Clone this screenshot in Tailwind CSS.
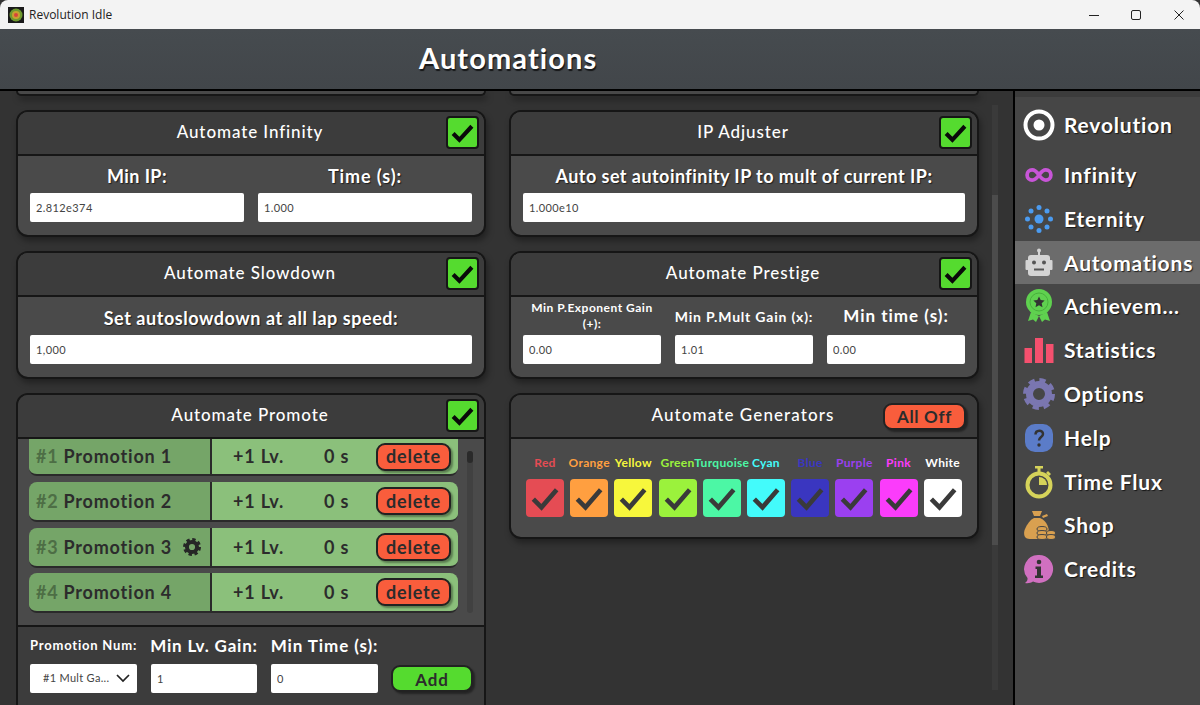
<!DOCTYPE html>
<html lang="en">
<head>
    <meta charset="UTF-8">
    <title>Revolution Idle</title>
    <script src="https://cdn.jsdelivr.net/npm/@tailwindcss/browser@4"></script>
</head>
<body class="bg-[#333333] w-[1200px] h-[705px] overflow-hidden [font-family:Lato,sans-serif] text-white">
    <!-- window title bar -->
    <div class="h-[29px] bg-[#f3f3f3] flex items-center pl-[8px] rounded-t-[8px]">
        <svg width="16" height="16" viewBox="0 0 16 16"><rect width="16" height="16" fill="#1a1a1a"/><circle cx="8" cy="8" r="6.5" fill="#6f9a2e"/><circle cx="8" cy="8" r="4" fill="#c8a030"/><circle cx="8" cy="8" r="2" fill="#d8433a"/></svg>
        <span class="ml-[5px] text-[12px] text-[#222] [font-family:'Open_Sans',sans-serif]">Revolution Idle</span>
        <div class="ml-auto flex items-center">
            <svg class="mr-[32px]" width="10" height="10" viewBox="0 0 10 10"><path d="M0 5.5h10" stroke="#222" stroke-width="1"/></svg>
            <svg class="mr-[33px]" width="10" height="10" viewBox="0 0 10 10"><rect x=".5" y=".5" width="9" height="9" rx="1.5" fill="none" stroke="#222"/></svg>
            <svg class="mr-[16px]" width="10" height="10" viewBox="0 0 10 10"><path d="M.5.5l9 9M9.5.5l-9 9" stroke="#222"/></svg>
        </div>
    </div>

    <!-- page header -->
    <div class="h-[62px] bg-gradient-to-b from-[#464b4f] to-[#42464a] border-b-2 border-black flex items-center pl-[419px] pb-[2px]">
        <h1 class="text-[29px] font-bold tracking-[1.1px] [text-shadow:1px_2px_1px_rgba(0,0,0,0.7)]">Automations</h1>
    </div>

    <div class="flex h-[614px]">
        <!-- scrolled content -->
        <div class="w-[1013px] h-full overflow-hidden flex pl-[16px] relative">
            <div class="w-[470px] shrink-0 flex flex-col">
                <div class="h-[5px] shrink-0 bg-[#484848] border-2 border-t-0 border-[#161616] rounded-b-[12px] mb-[14px] shadow-[2px_4px_6px_rgba(0,0,0,0.35)]"></div>

                <section class="h-[127px] shrink-0 rounded-[12px] border-2 border-[#161616] bg-[#4a4a4a] overflow-hidden flex flex-col mb-[14px] shadow-[2px_4px_6px_rgba(0,0,0,0.35)]">
                    <div class="h-[44px] shrink-0 bg-[#3c3c3c] border-b-2 border-[#161616] flex items-center justify-center relative pb-[2px]">
                        <span class="text-[17px] font-medium tracking-[0.9px] pr-[2px]">Automate Infinity</span>
                        <div class="absolute right-[5px] top-[4px] w-[33px] h-[33px] rounded-[4px] bg-[#55db2f] border-2 border-[#161616] flex items-center justify-center">
                            <svg width="25" height="25" viewBox="0 0 24 24"><path d="M3 13l6 6L21 6" fill="none" stroke="#0a0a0a" stroke-width="4"/></svg>
                        </div>
                    </div>
                    <div class="flex gap-[14px] px-[12px] pt-[10px]">
                        <div class="flex-1">
                            <div class="h-[20px] mb-[7px] flex items-center justify-center text-[18px] font-bold tracking-[0.4px] [text-shadow:1px_1px_1px_rgba(0,0,0,0.6)]">Min IP:</div>
                            <input value="2.812e374" class="w-full h-[29px] bg-white rounded-[2px] px-[6px] text-[11px] tracking-[0.4px] text-[#444]">
                        </div>
                        <div class="flex-1">
                            <div class="h-[20px] mb-[7px] flex items-center justify-center text-[18px] font-bold tracking-[0.9px] [text-shadow:1px_1px_1px_rgba(0,0,0,0.6)]">Time (s):</div>
                            <input value="1.000" class="w-full h-[29px] bg-white rounded-[2px] px-[6px] text-[11px] tracking-[0.4px] text-[#444]">
                        </div>
                    </div>
                </section>

                <section class="h-[128px] shrink-0 rounded-[12px] border-2 border-[#161616] bg-[#4a4a4a] overflow-hidden flex flex-col mb-[14px] shadow-[2px_4px_6px_rgba(0,0,0,0.35)]">
                    <div class="h-[44px] shrink-0 bg-[#3c3c3c] border-b-2 border-[#161616] flex items-center justify-center relative pb-[2px]">
                        <span class="text-[17px] font-medium tracking-[0.9px] pr-[2px]">Automate Slowdown</span>
                        <div class="absolute right-[5px] top-[4px] w-[33px] h-[33px] rounded-[4px] bg-[#55db2f] border-2 border-[#161616] flex items-center justify-center">
                            <svg width="25" height="25" viewBox="0 0 24 24"><path d="M3 13l6 6L21 6" fill="none" stroke="#0a0a0a" stroke-width="4"/></svg>
                        </div>
                    </div>
                    <div class="px-[12px] pt-[11px]">
                        <div class="h-[20px] mb-[7px] flex items-center justify-center text-[18px] font-bold tracking-[0.55px] [text-shadow:1px_1px_1px_rgba(0,0,0,0.6)]">Set autoslowdown at all lap speed:</div>
                        <input value="1,000" class="w-full h-[29px] bg-white rounded-[2px] px-[6px] text-[11px] tracking-[0.4px] text-[#444]">
                    </div>
                </section>

                <section class="h-[330px] shrink-0 rounded-[12px] border-2 border-[#161616] bg-[#3c3c3c] overflow-hidden flex flex-col">
                    <div class="h-[44px] shrink-0 bg-[#3c3c3c] border-b-2 border-[#161616] flex items-center justify-center relative pb-[2px]">
                        <span class="text-[17px] font-medium tracking-[0.9px] pr-[2px]">Automate Promote</span>
                        <div class="absolute right-[5px] top-[4px] w-[33px] h-[33px] rounded-[4px] bg-[#55db2f] border-2 border-[#161616] flex items-center justify-center">
                            <svg width="25" height="25" viewBox="0 0 24 24"><path d="M3 13l6 6L21 6" fill="none" stroke="#0a0a0a" stroke-width="4"/></svg>
                        </div>
                    </div>
                    <div class="h-[188px] shrink-0 bg-[#4a4a4a] border-b-2 border-[#161616] pl-[11px] flex relative">
                        <div class="w-[429px] flex flex-col">
                            <div class="h-[37px] shrink-0 mb-[6px] flex rounded-b-[8px] overflow-hidden border-b-2 border-[#2a2a2a]">
                                <div class="w-[183px] bg-[#75a568] border-r-2 border-[#2a2a2a] flex items-center pl-[7px] text-[18px] font-bold tracking-[0.8px] text-[#2c2c2c]"><span class="text-[#4d6e45] mr-[5px]">#1</span>Promotion 1</div>
                                <div class="flex-1 bg-[#8bc07b] flex items-center text-[18px] font-bold tracking-[0.8px] text-[#2c2c2c]"><span class="ml-[21px] w-[91px]">+1 Lv.</span><span class="w-[52px]">0 s</span><span class="w-[75px] h-[28px] rounded-[9px] bg-[#f95d3c] border-2 border-[#222] flex items-center justify-center shadow-[2px_2px_2px_rgba(0,0,0,0.35)]">delete</span></div>
                            </div>
                            <div class="h-[40px] shrink-0 mb-[6px] flex rounded-[8px] overflow-hidden border-b-2 border-[#2a2a2a]">
                                <div class="w-[183px] bg-[#75a568] border-r-2 border-[#2a2a2a] flex items-center pl-[7px] text-[18px] font-bold tracking-[0.8px] text-[#2c2c2c]"><span class="text-[#4d6e45] mr-[5px]">#2</span>Promotion 2</div>
                                <div class="flex-1 bg-[#8bc07b] flex items-center text-[18px] font-bold tracking-[0.8px] text-[#2c2c2c]"><span class="ml-[21px] w-[91px]">+1 Lv.</span><span class="w-[52px]">0 s</span><span class="w-[75px] h-[28px] rounded-[9px] bg-[#f95d3c] border-2 border-[#222] flex items-center justify-center shadow-[2px_2px_2px_rgba(0,0,0,0.35)]">delete</span></div>
                            </div>
                            <div class="h-[40px] shrink-0 mb-[5px] flex rounded-[8px] overflow-hidden border-b-2 border-[#2a2a2a]">
                                <div class="w-[183px] bg-[#75a568] border-r-2 border-[#2a2a2a] flex items-center pl-[7px] text-[18px] font-bold tracking-[0.8px] text-[#2c2c2c]"><span class="text-[#4d6e45] mr-[5px]">#3</span>Promotion 3
                                    <svg class="ml-[11px]" width="18" height="18" viewBox="0 0 32 32"><circle cx="16" cy="16" r="9" fill="none" stroke="#262626" stroke-width="7"/><circle cx="16" cy="16" r="13.5" fill="none" stroke="#262626" stroke-width="5" stroke-dasharray="6 4.6"/></svg>
                                </div>
                                <div class="flex-1 bg-[#8bc07b] flex items-center text-[18px] font-bold tracking-[0.8px] text-[#2c2c2c]"><span class="ml-[21px] w-[91px]">+1 Lv.</span><span class="w-[52px]">0 s</span><span class="w-[75px] h-[28px] rounded-[9px] bg-[#f95d3c] border-2 border-[#222] flex items-center justify-center shadow-[2px_2px_2px_rgba(0,0,0,0.35)]">delete</span></div>
                            </div>
                            <div class="h-[40px] shrink-0 flex rounded-[8px] overflow-hidden border-b-2 border-[#2a2a2a]">
                                <div class="w-[183px] bg-[#75a568] border-r-2 border-[#2a2a2a] flex items-center pl-[7px] text-[18px] font-bold tracking-[0.8px] text-[#2c2c2c]"><span class="text-[#4d6e45] mr-[5px]">#4</span>Promotion 4</div>
                                <div class="flex-1 bg-[#8bc07b] flex items-center text-[18px] font-bold tracking-[0.8px] text-[#2c2c2c]"><span class="ml-[21px] w-[91px]">+1 Lv.</span><span class="w-[52px]">0 s</span><span class="w-[75px] h-[28px] rounded-[9px] bg-[#f95d3c] border-2 border-[#222] flex items-center justify-center shadow-[2px_2px_2px_rgba(0,0,0,0.35)]">delete</span></div>
                            </div>
                        </div>
                        <div class="ml-[9px] mt-[12px] w-[6px] h-[162px] rounded-full bg-[#414141]"><div class="h-[12px] rounded-full bg-[#2a2a2a]"></div></div>
                    </div>
                    <div class="flex pl-[12px] pt-[9px] gap-[14px]">
                        <div class="w-[107px]">
                            <div class="h-[20px] mb-[8px] flex items-center justify-center text-[13px] font-bold tracking-[0.8px] whitespace-nowrap">Promotion Num:</div>
                            <div class="h-[29px] bg-white rounded-[2px] flex items-center pl-[13px] text-[11px] tracking-[0.3px] text-[#444]">#1 Mult Ga...
                                <svg class="ml-[7px]" width="14" height="9" viewBox="0 0 14 9"><path d="M1 1l6 6 6-6" fill="none" stroke="#222" stroke-width="1.7"/></svg>
                            </div>
                        </div>
                        <div class="w-[106px]">
                            <div class="h-[20px] mb-[8px] flex items-center justify-center text-[17px] font-bold tracking-[0.8px] whitespace-nowrap">Min Lv. Gain:</div>
                            <input value="1" class="w-full h-[29px] bg-white rounded-[2px] px-[6px] text-[11px] text-[#444]">
                        </div>
                        <div class="w-[107px]">
                            <div class="h-[20px] mb-[8px] flex items-center justify-center text-[17px] font-bold tracking-[0.9px] whitespace-nowrap">Min Time (s):</div>
                            <input value="0" class="w-full h-[29px] bg-white rounded-[2px] px-[6px] text-[11px] text-[#444]">
                        </div>
                        <button class="w-[82px] h-[27px] mt-[29px] -ml-[1px] rounded-[9px] bg-[#55db2f] border-2 border-[#222] text-[17px] font-bold tracking-[0.8px] text-[#2c2c2c] shadow-[2px_2px_2px_rgba(0,0,0,0.4)]">Add</button>
                    </div>
                </section>
            </div>

            <div class="w-[470px] shrink-0 ml-[23px] flex flex-col">
                <div class="h-[5px] shrink-0 bg-[#484848] border-2 border-t-0 border-[#161616] rounded-b-[12px] mb-[14px] shadow-[2px_4px_6px_rgba(0,0,0,0.35)]"></div>

                <section class="h-[127px] shrink-0 rounded-[12px] border-2 border-[#161616] bg-[#4a4a4a] overflow-hidden flex flex-col mb-[14px] shadow-[2px_4px_6px_rgba(0,0,0,0.35)]">
                    <div class="h-[44px] shrink-0 bg-[#3c3c3c] border-b-2 border-[#161616] flex items-center justify-center relative pb-[2px]">
                        <span class="text-[17px] font-medium tracking-[0.9px] pr-[2px]">IP Adjuster</span>
                        <div class="absolute right-[5px] top-[4px] w-[33px] h-[33px] rounded-[4px] bg-[#55db2f] border-2 border-[#161616] flex items-center justify-center">
                            <svg width="25" height="25" viewBox="0 0 24 24"><path d="M3 13l6 6L21 6" fill="none" stroke="#0a0a0a" stroke-width="4"/></svg>
                        </div>
                    </div>
                    <div class="px-[12px] pt-[10px]">
                        <div class="h-[20px] mb-[7px] flex items-center justify-center text-[18px] font-bold tracking-[0.45px] [text-shadow:1px_1px_1px_rgba(0,0,0,0.6)]">Auto set autoinfinity IP to mult of current IP:</div>
                        <input value="1.000e10" class="w-full h-[29px] bg-white rounded-[2px] px-[6px] text-[11px] tracking-[0.4px] text-[#444]">
                    </div>
                </section>

                <section class="h-[128px] shrink-0 rounded-[12px] border-2 border-[#161616] bg-[#4a4a4a] overflow-hidden flex flex-col mb-[14px] shadow-[2px_4px_6px_rgba(0,0,0,0.35)]">
                    <div class="h-[44px] shrink-0 bg-[#3c3c3c] border-b-2 border-[#161616] flex items-center justify-center relative pb-[2px]">
                        <span class="text-[17px] font-medium tracking-[0.9px] pr-[2px]">Automate Prestige</span>
                        <div class="absolute right-[5px] top-[4px] w-[33px] h-[33px] rounded-[4px] bg-[#55db2f] border-2 border-[#161616] flex items-center justify-center">
                            <svg width="25" height="25" viewBox="0 0 24 24"><path d="M3 13l6 6L21 6" fill="none" stroke="#0a0a0a" stroke-width="4"/></svg>
                        </div>
                    </div>
                    <div class="flex gap-[14px] px-[12px]">
                        <div class="w-[138px]">
                            <div class="h-[38px] flex items-center justify-center text-center text-[12px] leading-[16px] font-bold tracking-[0.5px]">Min P.Exponent Gain (+):</div>
                            <input value="0.00" class="w-full h-[29px] bg-white rounded-[2px] px-[6px] text-[11px] tracking-[0.4px] text-[#444]">
                        </div>
                        <div class="w-[138px]">
                            <div class="h-[38px] flex items-center justify-center text-[14px] font-bold tracking-[0.8px] whitespace-nowrap">Min P.Mult Gain (x):</div>
                            <input value="1.01" class="w-full h-[29px] bg-white rounded-[2px] px-[6px] text-[11px] tracking-[0.4px] text-[#444]">
                        </div>
                        <div class="w-[138px]">
                            <div class="h-[38px] flex items-center justify-center text-[17px] font-bold tracking-[1px] whitespace-nowrap">Min time (s):</div>
                            <input value="0.00" class="w-full h-[29px] bg-white rounded-[2px] px-[6px] text-[11px] tracking-[0.4px] text-[#444]">
                        </div>
                    </div>
                </section>

                <section class="h-[146px] shrink-0 rounded-[12px] border-2 border-[#161616] bg-[#4a4a4a] overflow-hidden flex flex-col shadow-[2px_4px_6px_rgba(0,0,0,0.35)]">
                    <div class="h-[44px] shrink-0 bg-[#3c3c3c] border-b-2 border-[#161616] flex items-center justify-center relative pb-[2px]">
                        <span class="text-[17px] font-medium tracking-[1.1px] pr-[2px]">Automate Generators</span>
                        <div class="absolute right-[11px] top-[8px] w-[83px] h-[27px] rounded-[9px] bg-[#f95d3c] border-2 border-[#222] flex items-center justify-center text-[17px] font-bold tracking-[0.7px] text-[#2c2c2c] shadow-[2px_2px_2px_rgba(0,0,0,0.4)]">All Off</div>
                    </div>
                    <div class="flex gap-[6.2px] pl-[15px] pt-[15px]">
                        <div class="w-[38px] flex flex-col items-center"><span class="h-[16px] text-[12px] tracking-[0.3px] font-bold whitespace-nowrap text-[#e54c54]">Red</span><span class="mt-[9px] w-[38px] h-[38px] rounded-[4px] bg-[#e54c54] flex items-center justify-center"><svg width="28" height="28" viewBox="0 0 24 24"><path d="M2 13l7 7L22 5" fill="none" stroke="#3a3a3a" stroke-width="4"/></svg></span></div>
                        <div class="w-[38px] flex flex-col items-center"><span class="h-[16px] text-[12px] tracking-[0.3px] font-bold whitespace-nowrap text-[#ff9f40]">Orange</span><span class="mt-[9px] w-[38px] h-[38px] rounded-[4px] bg-[#ff9f40] flex items-center justify-center"><svg width="28" height="28" viewBox="0 0 24 24"><path d="M2 13l7 7L22 5" fill="none" stroke="#3a3a3a" stroke-width="4"/></svg></span></div>
                        <div class="w-[38px] flex flex-col items-center"><span class="h-[16px] text-[12px] tracking-[0.3px] font-bold whitespace-nowrap text-[#f7f73c]">Yellow</span><span class="mt-[9px] w-[38px] h-[38px] rounded-[4px] bg-[#f7f73c] flex items-center justify-center"><svg width="28" height="28" viewBox="0 0 24 24"><path d="M2 13l7 7L22 5" fill="none" stroke="#3a3a3a" stroke-width="4"/></svg></span></div>
                        <div class="w-[38px] flex flex-col items-center"><span class="h-[16px] text-[12px] tracking-[0.3px] font-bold whitespace-nowrap text-[#9bf23c]">Green</span><span class="mt-[9px] w-[38px] h-[38px] rounded-[4px] bg-[#9bf23c] flex items-center justify-center"><svg width="28" height="28" viewBox="0 0 24 24"><path d="M2 13l7 7L22 5" fill="none" stroke="#3a3a3a" stroke-width="4"/></svg></span></div>
                        <div class="w-[38px] flex flex-col items-center"><span class="h-[16px] text-[12px] tracking-[0.3px] font-bold whitespace-nowrap text-[#4cf7a5]">Turquoise</span><span class="mt-[9px] w-[38px] h-[38px] rounded-[4px] bg-[#4cf7a5] flex items-center justify-center"><svg width="28" height="28" viewBox="0 0 24 24"><path d="M2 13l7 7L22 5" fill="none" stroke="#3a3a3a" stroke-width="4"/></svg></span></div>
                        <div class="w-[38px] flex flex-col items-center"><span class="h-[16px] text-[12px] tracking-[0.3px] font-bold whitespace-nowrap text-[#43fbfb]">Cyan</span><span class="mt-[9px] w-[38px] h-[38px] rounded-[4px] bg-[#43fbfb] flex items-center justify-center"><svg width="28" height="28" viewBox="0 0 24 24"><path d="M2 13l7 7L22 5" fill="none" stroke="#3a3a3a" stroke-width="4"/></svg></span></div>
                        <div class="w-[38px] flex flex-col items-center"><span class="h-[16px] text-[12px] tracking-[0.3px] font-bold whitespace-nowrap text-[#3a36c0]">Blue</span><span class="mt-[9px] w-[38px] h-[38px] rounded-[4px] bg-[#3a36c0] flex items-center justify-center"><svg width="28" height="28" viewBox="0 0 24 24"><path d="M2 13l7 7L22 5" fill="none" stroke="#3a3a3a" stroke-width="4"/></svg></span></div>
                        <div class="w-[38px] flex flex-col items-center"><span class="h-[16px] text-[12px] tracking-[0.3px] font-bold whitespace-nowrap text-[#9b40f0]">Purple</span><span class="mt-[9px] w-[38px] h-[38px] rounded-[4px] bg-[#9b40f0] flex items-center justify-center"><svg width="28" height="28" viewBox="0 0 24 24"><path d="M2 13l7 7L22 5" fill="none" stroke="#3a3a3a" stroke-width="4"/></svg></span></div>
                        <div class="w-[38px] flex flex-col items-center"><span class="h-[16px] text-[12px] tracking-[0.3px] font-bold whitespace-nowrap text-[#fb3cfb]">Pink</span><span class="mt-[9px] w-[38px] h-[38px] rounded-[4px] bg-[#fb3cfb] flex items-center justify-center"><svg width="28" height="28" viewBox="0 0 24 24"><path d="M2 13l7 7L22 5" fill="none" stroke="#3a3a3a" stroke-width="4"/></svg></span></div>
                        <div class="w-[38px] flex flex-col items-center"><span class="h-[16px] text-[12px] tracking-[0.3px] font-bold whitespace-nowrap text-white">White</span><span class="mt-[9px] w-[38px] h-[38px] rounded-[4px] bg-white flex items-center justify-center"><svg width="28" height="28" viewBox="0 0 24 24"><path d="M2 13l7 7L22 5" fill="none" stroke="#3a3a3a" stroke-width="4"/></svg></span></div>
                    </div>
                </section>
            </div>

            <!-- page scrollbar -->
            <div class="ml-[13px] mt-[14px] w-[6px] h-[585px] shrink-0 bg-[#3a3a3a]"><div class="mt-[90px] h-[350px] bg-[#4c4c4c]"></div></div>
        </div>

        <!-- sidebar -->
        <nav class="w-[187px] h-full bg-[#464646] border-l-2 border-black flex flex-col [text-shadow:1px_1px_1px_rgba(0,0,0,0.7)] text-[21px] font-bold tracking-[0.8px]">
            <div class="h-[6px] bg-[#3c3c3c] shrink-0"></div>
            <div class="h-[56px] shrink-0 flex items-center pl-[8px]">
                <svg class="shrink-0" width="32" height="32" viewBox="0 0 32 32"><circle cx="16" cy="16" r="13.5" fill="none" stroke="#fff" stroke-width="4"/><circle cx="16" cy="16" r="5.5" fill="#fff"/></svg>
                <span class="ml-[9px]">Revolution</span>
            </div>
            <div class="h-[44px] shrink-0 flex items-center pl-[8px]">
                <svg class="shrink-0" width="32" height="32" viewBox="0 0 32 32"><path transform="translate(16 16) scale(.85) translate(-16 -16)" d="M16 16c-2.500-3.500-4.500-6-8-6a6 6 0 0 0 0 12c3.500 0 5.500-2.500 8-6s4.500-6 8-6a6 6 0 0 1 0 12c-3.500 0-5.500-2.500-8-6z" fill="none" stroke="#c855d8" stroke-width="4.400"/></svg>
                <span class="ml-[9px]">Infinity</span>
            </div>
            <div class="h-[44px] shrink-0 flex items-center pl-[8px]">
                <svg class="shrink-0" width="32" height="32" viewBox="0 0 32 32" fill="#4b9bf0"><circle cx="16" cy="16" r="4.500"/><circle cx="16" cy="4.500" r="2.500"/><circle cx="16" cy="27.500" r="2.500"/><circle cx="4.500" cy="16" r="2.500"/><circle cx="27.500" cy="16" r="2.500"/><circle cx="8" cy="8" r="2.500"/><circle cx="24" cy="8" r="2.500"/><circle cx="8" cy="24" r="2.500"/><circle cx="24" cy="24" r="2.500"/></svg>
                <span class="ml-[9px]">Eternity</span>
            </div>
            <div class="h-[43px] shrink-0 flex items-center pl-[8px] bg-[#6c6c6c]">
                <svg class="shrink-0" width="32" height="32" viewBox="0 0 32 32"><circle cx="16" cy="3.500" r="2" fill="#d4d4d4"/><path d="M15 4h2v5h-2z" fill="#d4d4d4"/><rect x="5" y="8" width="22" height="21" rx="3" fill="#d4d4d4"/><rect x="2.500" y="13" width="3" height="10" rx="1" fill="#d4d4d4"/><rect x="26.500" y="13" width="3" height="10" rx="1" fill="#d4d4d4"/><circle cx="11" cy="15.500" r="2" fill="#555"/><circle cx="21" cy="15.500" r="2" fill="#555"/><rect x="11" y="21.500" width="10" height="2" fill="#555"/></svg>
                <span class="ml-[9px]">Automations</span>
            </div>
            <div class="h-[44px] shrink-0 flex items-center pl-[8px]">
                <svg class="shrink-0" width="32" height="36" viewBox="0 0 32 36"><path d="M8 24l-3 9 5-1.500 3 2.500 3-6zM24 24l3 9-5-1.500-3 2.500-3-6z" fill="#5fd14f"/><circle cx="16" cy="14" r="13" fill="#5fd14f"/><circle cx="16" cy="14" r="9" fill="none" stroke="#48b03c" stroke-width="1"/><path d="M16 8.500l1.700 3.600 3.900.5-2.900 2.700.8 3.900-3.500-2-3.500 2 .8-3.900-2.900-2.700 3.900-.5z" fill="#333"/></svg>
                <span class="ml-[9px] w-[124px] overflow-hidden whitespace-nowrap">Achievem...</span>
            </div>
            <div class="h-[44px] shrink-0 flex items-center pl-[8px]">
                <svg class="shrink-0" width="32" height="32" viewBox="0 0 32 32" fill="#f5506e"><rect x="1.500" y="14" width="7.500" height="15"/><rect x="12" y="4" width="8" height="25"/><rect x="23" y="10" width="7.500" height="19"/></svg>
                <span class="ml-[9px]">Statistics</span>
            </div>
            <div class="h-[44px] shrink-0 flex items-center pl-[8px]">
                <svg class="shrink-0" width="32" height="32" viewBox="0 0 32 32"><circle cx="16" cy="16" r="9.500" fill="none" stroke="#7a76b0" stroke-width="7"/><circle cx="16" cy="16" r="13.500" fill="none" stroke="#7a76b0" stroke-width="5" stroke-dasharray="6 4.600"/></svg>
                <span class="ml-[9px]">Options</span>
            </div>
            <div class="h-[44px] shrink-0 flex items-center pl-[8px]">
                <svg class="shrink-0" width="32" height="32" viewBox="0 0 32 32"><rect x="2" y="2" width="28" height="28" rx="10" fill="#5b7cc8"/><path d="M12.500 12.500c0-5 7.500-5 7.500-.5 0 3-4 3-4 6.500" fill="none" stroke="#333" stroke-width="2.500"/><circle cx="16" cy="23" r="1.700" fill="#333"/></svg>
                <span class="ml-[9px]">Help</span>
            </div>
            <div class="h-[43px] shrink-0 flex items-center pl-[8px]">
                <svg class="shrink-0" width="32" height="34" viewBox="0 0 32 34"><path d="M12 1h8v2.500h-8z" fill="#d6d35a"/><path d="M14.500 3h3v4h-3zM25 6l3 3-2 2-3-3z" fill="#d6d35a"/><circle cx="16" cy="20" r="11.500" fill="none" stroke="#d6d35a" stroke-width="4"/><path d="M16 12a8 8 0 0 1 8 8h-8z" fill="#d6d35a"/></svg>
                <span class="ml-[9px]">Time Flux</span>
            </div>
            <div class="h-[44px] shrink-0 flex items-center pl-[8px]">
                <svg class="shrink-0" width="33" height="32" viewBox="0 0 33 32"><path d="M9 2h10l-2 5h-6z" fill="#d9a050"/><path d="M19 7l5-2 1 2-5 2z" fill="#d9a050"/><path d="M11 9h6c7 3 10 10 9 21H7c-6 0-7-5-5-10 2-5 5-9 9-11z" fill="#d9a050"/><g fill="#d9a050" stroke="#464646"><ellipse cx="19" cy="20" rx="5" ry="2.500"/><ellipse cx="19" cy="24" rx="5" ry="2.500"/><ellipse cx="19" cy="28" rx="5" ry="2.500"/><ellipse cx="28" cy="24" rx="4.500" ry="2.500"/><ellipse cx="28" cy="28" rx="4.500" ry="2.500"/></g></svg>
                <span class="ml-[8px]">Shop</span>
            </div>
            <div class="h-[44px] shrink-0 flex items-center pl-[8px]">
                <svg class="shrink-0" width="32" height="32" viewBox="0 0 32 32"><path d="M16 2a14 14 0 1 1-6 26.600c-2 1.400-5 1.900-8 1.400 2-1.500 2.700-3 2.500-5A14 14 0 0 1 16 2z" fill="#d070c0"/><circle cx="16" cy="9" r="2.300" fill="#333"/><path d="M12.500 13.500H18v9h2v2.500h-8v-2.500h2V16h-1.500z" fill="#333"/></svg>
                <span class="ml-[9px]">Credits</span>
            </div>
        </nav>
    </div>
</body>
</html>
